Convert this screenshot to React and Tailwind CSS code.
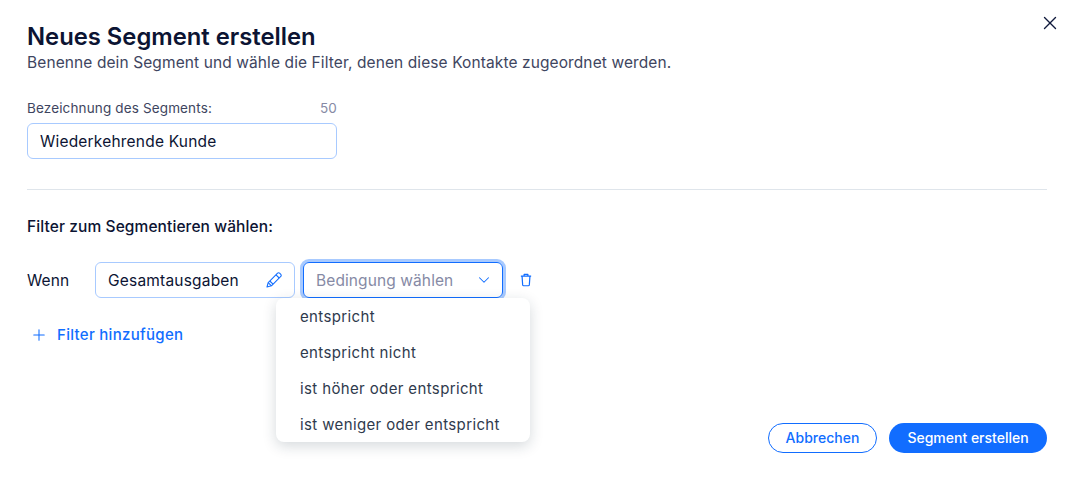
import { ChevronDown, Plus, X } from 'lucide-react';

const options = ['entspricht', 'entspricht nicht', 'ist höher oder entspricht', 'ist weniger oder entspricht'];

function PencilIcon() {
  return (
    <svg width="18" height="18" viewBox="0 0 18 18" fill="none" stroke="#116dff" strokeWidth="1.1" strokeLinejoin="round">
      <path d="M2 16l1.2-4.4L12.6 2.2a1.4 1.4 0 0 1 2 0l1.2 1.2a1.4 1.4 0 0 1 0 2L6.4 14.8 2 16z" />
      <path d="M3.2 11.6l3.2 3.2M11 3.8l3.2 3.2M4.8 10l3.2 3.2" />
    </svg>
  );
}

function TrashIcon() {
  return (
    <svg width="12" height="14" viewBox="0 0 14 16" fill="none" stroke="#116dff" strokeWidth="1.4" strokeLinejoin="round">
      <path d="M1 3.5h12M4.8 3.5V1.4h4.4v2.1M2.4 3.5l.7 10.2a1.2 1.2 0 0 0 1.2 1h5.4a1.2 1.2 0 0 0 1.2-1l.7-10.2" />
    </svg>
  );
}

export default function App() {
  return (
    <main className="flex h-[481px] w-[1073px] flex-col overflow-hidden bg-white pl-[27px] pr-[26px] pt-[22px] font-['Inter',sans-serif] text-[#162d3d]">
      {/* Header */}
      <header className="flex items-start justify-between">
        <div>
          <h1 className="text-[23.8px] font-semibold leading-[30px] text-[#0c1433]">Neues Segment erstellen</h1>
          <p className="text-[15.5px] leading-[22px] tracking-[0.1px] text-[#3e4560]">
            Benenne dein Segment und wähle die Filter, denen diese Kontakte zugeordnet werden.
          </p>
        </div>
        <button type="button" className="-mt-[10px] mr-[-14px] text-[#101a3c]" aria-label="Schließen">
          <X size={22} strokeWidth={1.5} />
        </button>
      </header>

      {/* Name */}
      <section className="mt-[25px] w-[310px]">
        <div className="flex items-center justify-between text-[13.5px] leading-[18px] tracking-[0.14px]">
          <label className="text-[#3e4560]">Bezeichnung des Segments:</label>
          <span className="text-[#868aa5]">50</span>
        </div>
        <div className="mt-[6px] flex h-[36px] items-center rounded-[6px] border border-[#a8caff] px-[12px] pt-[1px] text-[15.5px] tracking-[0.2px] text-[#0c1433]">
          Wiederkehrende Kunde
        </div>
      </section>

      <hr className="mt-[30px] border-[#dfe5eb]" />

      {/* Filter */}
      <h2 className="mt-[27px] text-[15.5px] font-medium leading-[20px] tracking-[0.1px] text-[#0c1433]">Filter zum Segmentieren wählen:</h2>

      <div className="mt-[25px] flex items-center">
        <span className="w-[68px] pt-[2px] text-[15.5px] tracking-[0.1px] text-[#0c1433]">Wenn</span>
        <div className="flex h-[36px] w-[200px] items-center justify-between rounded-[6px] border border-[#a8caff] pl-[12px] pr-[11px] text-[15.5px] tracking-[0.2px] text-[#0c1433]">
          <span className="pt-[2px]">Gesamtausgaben</span>
          <PencilIcon />
        </div>
        <div className="relative ml-[8px]">
          <div className="flex h-[36px] w-[200px] items-center justify-between rounded-[6px] border border-[#116dff] pl-[12px] pr-[9px] text-[15.5px] tracking-[0.1px] text-[#868aa5] shadow-[0_0_0_3px_#a8caff]">
            <span className="pt-[2px]">Bedingung wählen</span>
            <ChevronDown size={18} strokeWidth={1.4} className="text-[#116dff]" />
          </div>
          {/* Dropdown */}
          <ul className="absolute left-[-27px] top-[36px] z-10 w-[254px] rounded-[8px] bg-white text-[15px] tracking-[0.37px] text-[#2f3a4d] shadow-[0_4px_14px_rgba(22,45,61,0.18)]">
            {options.map((option) => (
              <li key={option} className="flex h-[36px] items-center pl-[24px] pt-[2px]">{option}</li>
            ))}
          </ul>
        </div>
        <button type="button" className="ml-[17px]" aria-label="Löschen">
          <TrashIcon />
        </button>
      </div>

      <button type="button" className="mt-[27px] flex items-center self-start text-[15px] font-medium leading-[20px] tracking-[0.3px] text-[#116dff]">
        <Plus size={18} strokeWidth={1.4} className="mr-[9px] ml-[3px]" />
        Filter hinzufügen
      </button>

      {/* Footer */}
      <footer className="mt-[78px] flex justify-end gap-[12px] text-[14px] leading-none">
        <button type="button" className="h-[30px] w-[109px] rounded-full border border-[#116dff] font-medium text-[#116dff]">
          Abbrechen
        </button>
        <button type="button" className="h-[30px] w-[158px] rounded-full bg-[#116dff] font-medium text-white">
          Segment erstellen
        </button>
      </footer>
    </main>
  );
}
